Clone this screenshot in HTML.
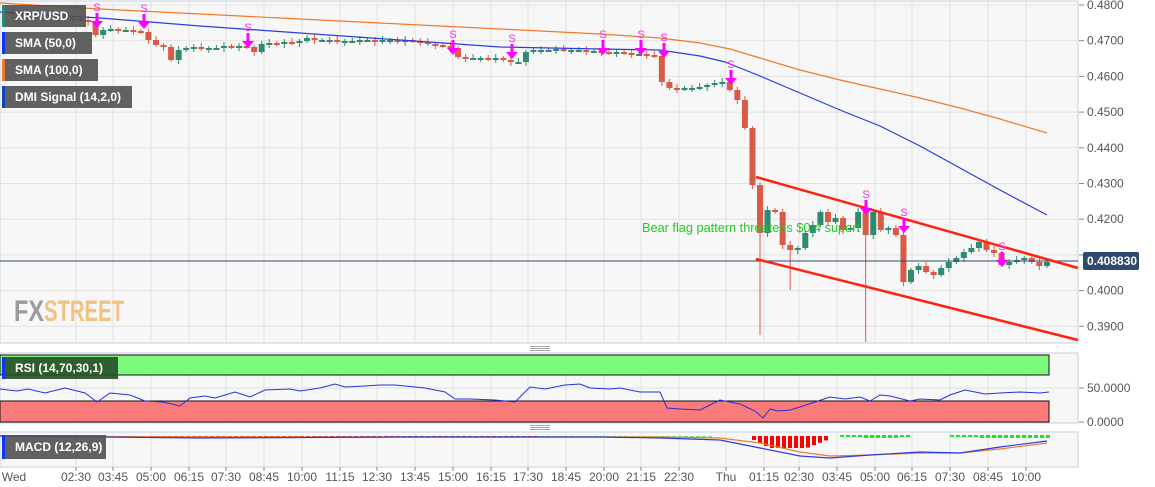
<!DOCTYPE html>
<html><head><meta charset="utf-8"><style>
html,body{margin:0;padding:0;background:#fff;width:1155px;height:487px;overflow:hidden;font-family:"Liberation Sans",sans-serif}
svg{position:absolute;left:0;top:0}
.lab{position:absolute;left:2px;background:rgba(80,80,80,.9);color:#fff;font-size:12px;font-weight:bold;height:22px;line-height:22px;padding-left:10px;box-sizing:border-box;border-left:3px solid;white-space:nowrap;overflow:hidden}
</style></head><body>
<svg id="s" width="1155" height="487" xmlns="http://www.w3.org/2000/svg" font-family="Liberation Sans, sans-serif">
<rect x="0" y="1" width="1078" height="342" fill="#f7f7f7" stroke="#c9cde0"/>
<rect x="0" y="353" width="1078" height="70" fill="#f7f7f7" stroke="#c9cde0"/>
<rect x="0" y="432" width="1078" height="35" fill="#f7f7f7" stroke="#c9cde0"/>
<g id="grid" stroke="#e2e2e2" stroke-width="1"></g>
<g font-size="12" fill="#555" id="ax"></g>
<rect x="0" y="355" width="1049" height="20" fill="#7dfa7d" stroke="#111" stroke-width="1"/>
<rect x="0" y="401" width="1049" height="21" fill="#fb7b7b" stroke="#111" stroke-width="1"/>
<polyline fill="none" stroke="#2233dd" stroke-width="1" points="0,389 17,391 28,389 45,393 65,388 85,393 97,402 110,393 130,395 145,401 162,402 172,404 180,406 190,398 205,396 215,398 235,392 250,397 265,390 290,389 300,391 320,388 335,384 345,387 365,386 380,385 395,385 425,388 445,392 455,399 470,399 495,400 515,402 530,387 545,389 565,385 580,384 590,388 610,389 620,388 640,392 660,392 667,408 680,409 700,410 710,405 720,400 730,402 740,404 755,411 763,418 770,409 778,411 790,410 800,407 815,402 830,397 845,399 860,397 870,401 880,395 890,396 910,401 920,399 940,400 950,395 965,390 985,394 1000,393 1020,392 1040,393 1049,392"/>
<g id="c"></g>
<polyline fill="none" stroke="#2a3de0" stroke-width="1.2" points="0,12 100,18 200,26 300,33 400,40 500,47 600,49 660,50 700,56 725,62 760,76 800,93 840,110 880,126 920,146 960,168 1000,190 1047,215"/>
<polyline fill="none" stroke="#f07a2a" stroke-width="1.2" points="0,3 100,9 200,14 300,19 400,24 500,29 600,34 660,38 700,43 730,49 760,58 800,70 840,80 880,89 920,98 960,108 1000,119 1047,133"/>
<line x1="0" y1="261" x2="1078" y2="261" stroke="#2c4a70" stroke-width="1"/>
<line x1="756" y1="177" x2="1078" y2="268" stroke="#f21" stroke-width="2.5"/>
<line x1="756" y1="259" x2="1078" y2="340" stroke="#f21" stroke-width="2.5"/>
<g id="arr"></g>
<text x="642" y="232" font-size="13" fill="#1fcc1f" textLength="218" lengthAdjust="spacingAndGlyphs">Bear flag pattern threatens $0.4 suport</text>
<text x="14" y="321" font-size="30" font-weight="bold" fill="#9a9ba0" textLength="30" lengthAdjust="spacingAndGlyphs">FX</text>
<text x="44" y="321" font-size="30" font-weight="bold" fill="#f2c285" textLength="80" lengthAdjust="spacingAndGlyphs">STREET</text>
<rect x="1083" y="252" width="56" height="18" rx="2" fill="#2f4a6d"/>
<text x="1087" y="265" font-size="12" font-weight="bold" fill="#fff">0.408830</text>
<g stroke="#888" stroke-width="0.7"><line x1="530" y1="346.5" x2="550" y2="346.5"/><line x1="530" y1="348.5" x2="550" y2="348.5"/><line x1="530" y1="350.5" x2="550" y2="350.5"/>
<line x1="530" y1="425.5" x2="550" y2="425.5"/><line x1="530" y1="427.5" x2="550" y2="427.5"/><line x1="530" y1="429.5" x2="550" y2="429.5"/></g>
<g id="m"></g>
<polyline fill="none" stroke="#f07a2a" stroke-width="1.2" points="0,436 200,437 400,437 600,437 660,437 720,438 760,443 800,452 830,456 870,455 920,453 960,453 1000,449 1047,443"/>
<polyline fill="none" stroke="#2a3de0" stroke-width="1.2" points="0,436 200,438 400,437 600,437 660,438 720,440 760,448 800,456 830,458 870,455 920,452 960,453 1000,447 1047,441"/>
</svg>
<div class="lab" style="top:5px;width:84px;border-color:#2a8a70">XRP/USD</div>
<div class="lab" style="top:32px;width:90px;border-color:#1133ff">SMA (50,0)</div>
<div class="lab" style="top:59px;width:96px;border-color:#f07a2a">SMA (100,0)</div>
<div class="lab" style="top:86px;width:130px;border-color:#1144bb">DMI Signal (14,2,0)</div>
<div class="lab" style="top:357px;width:116px;border-color:#1133ff;background:rgba(40,80,40,.92)">RSI (14,70,30,1)</div>
<div class="lab" style="top:435px;width:104px;height:24px;line-height:24px;border-color:#1133ff">MACD (12,26,9)</div>
<script>
var NS="http://www.w3.org/2000/svg";
function el(p,t,a,txt){var e=document.createElementNS(NS,t);for(var k in a)e.setAttribute(k,a[k]);if(txt!=null)e.textContent=txt;document.getElementById(p).appendChild(e);return e;}
var pl=[0.48,0.47,0.46,0.45,0.44,0.43,0.42,0.41,0.40,0.39];
pl.forEach(function(p,i){var y=5+i*35.7;el("grid","line",{x1:0,y1:y,x2:1078,y2:y});el("ax","line",{x1:1079,y1:y,x2:1084,y2:y,stroke:"#888"});if(i!=7)el("ax","text",{x:1087,y:y+4},p.toFixed(4));});
el("grid","line",{x1:0,y1:388,x2:1078,y2:388});
el("ax","line",{x1:1079,y1:388,x2:1084,y2:388,stroke:"#888"});el("ax","text",{x:1087,y:392},"50.0000");
el("ax","line",{x1:1079,y1:422,x2:1084,y2:422,stroke:"#888"});el("ax","text",{x:1087,y:426},"0.0000");
var tl=[["Wed",14],["02:30",76],["03:45",113],["05:00",151],["06:15",189],["07:30",226],["08:45",264],["10:00",302],["11:15",340],["12:30",377],["13:45",415],["15:00",453],["16:15",491],["17:30",528],["18:45",566],["20:00",604],["21:15",641],["22:30",679],["Thu",726],["01:15",764],["02:30",799],["03:45",837],["05:00",875],["06:15",912],["07:30",950],["08:45",988],["10:00",1026]];
tl.forEach(function(t){var x=t[1];if(t[0]!="Wed"){[[1,343],[353,423],[432,467]].forEach(function(r){el("grid","line",{x1:x,y1:r[0],x2:x,y2:r[1]});});el("ax","line",{x1:x,y1:467,x2:x,y2:471,stroke:"#888"});}
el("ax","text",{x:x,y:481,"text-anchor":"middle"},t[0]);});
var c=[12,14,16,17,16,17,18,17,18,19,20,22,35,30,29,30,30,31,32,40,45,47,60,50,48,47,49,48,48,46,47,46,47,52,44,43,44,42,43,41,38,40,40,40,42,41,41,40,40,42,40,40,42,40,41,42,44,45,46,48,57,58,58,58,59,58,60,62,62,52,50,50,50,49,50,50,50,51,51,52,53,52,53,54,54,55,56,82,88,89,88,88,87,85,83,82,90,100,128,185,233,210,212,245,250,248,233,225,212,222,218,230,228,212,235,212,230,228,235,282,270,266,272,275,268,262,258,252,248,242,250,253,265,262,260,258,262,266,262];
var lw={100:335,104:290,114:342};
for(var i=1;i<c.length;i++){var x=5+i*7.55,o=c[i-1],cl=c[i];var dn=cl>o;var col=dn?"#d95a48":"#2e8a70";
var hi=Math.min(o,cl)-2-(i%3),lo=Math.max(o,cl)+2+(i%2)*2;if(lw[i])lo=lw[i];
el("c","line",{x1:x,y1:hi,x2:x,y2:lo,stroke:col,"stroke-width":1});
var h=Math.max(Math.abs(cl-o),2);el("c","rect",{x:x-3,y:Math.min(o,cl),width:6,height:h,fill:col});}
[[97,3],[144,4],[248,23],[453,30],[512,34],[603,30],[641,30],[664,33],[731,60],[866,190],[904,208],[1002,242]].forEach(function(a){var x=a[0],y=a[1];
el("arr","text",{x:x,y:y+8,"font-size":11,fill:"#ff22ff","text-anchor":"middle"},"S");
el("arr","rect",{x:x-1.5,y:y+10,width:3,height:9,fill:"#ff00ff"});
el("arr","polygon",{points:(x-6)+","+(y+18)+" "+(x+6)+","+(y+18)+" "+x+","+(y+25),fill:"#ff00ff"});});
for(var x=150;x<710;x+=6){el("m","rect",{x:x,y:436,width:4,height:1.5,fill:x<540?"#e22":"#6e6"});}
for(var x=752;x<830;x+=6){var h=x<770?4+(x-752)/2:x<805?12:12-(x-805)/2.5;el("m","rect",{x:x,y:436,width:4,height:Math.max(h,2),fill:"#f00"});}
for(var x=840;x<910;x+=6){el("m","rect",{x:x,y:435,width:4,height:2+(x>860&&x<895?1:0),fill:"#1e1"});}
for(var x=950;x<1048;x+=6){el("m","rect",{x:x,y:435,width:4,height:2+(x>975?1:0),fill:"#1e1"});}
</script>
</body></html>
